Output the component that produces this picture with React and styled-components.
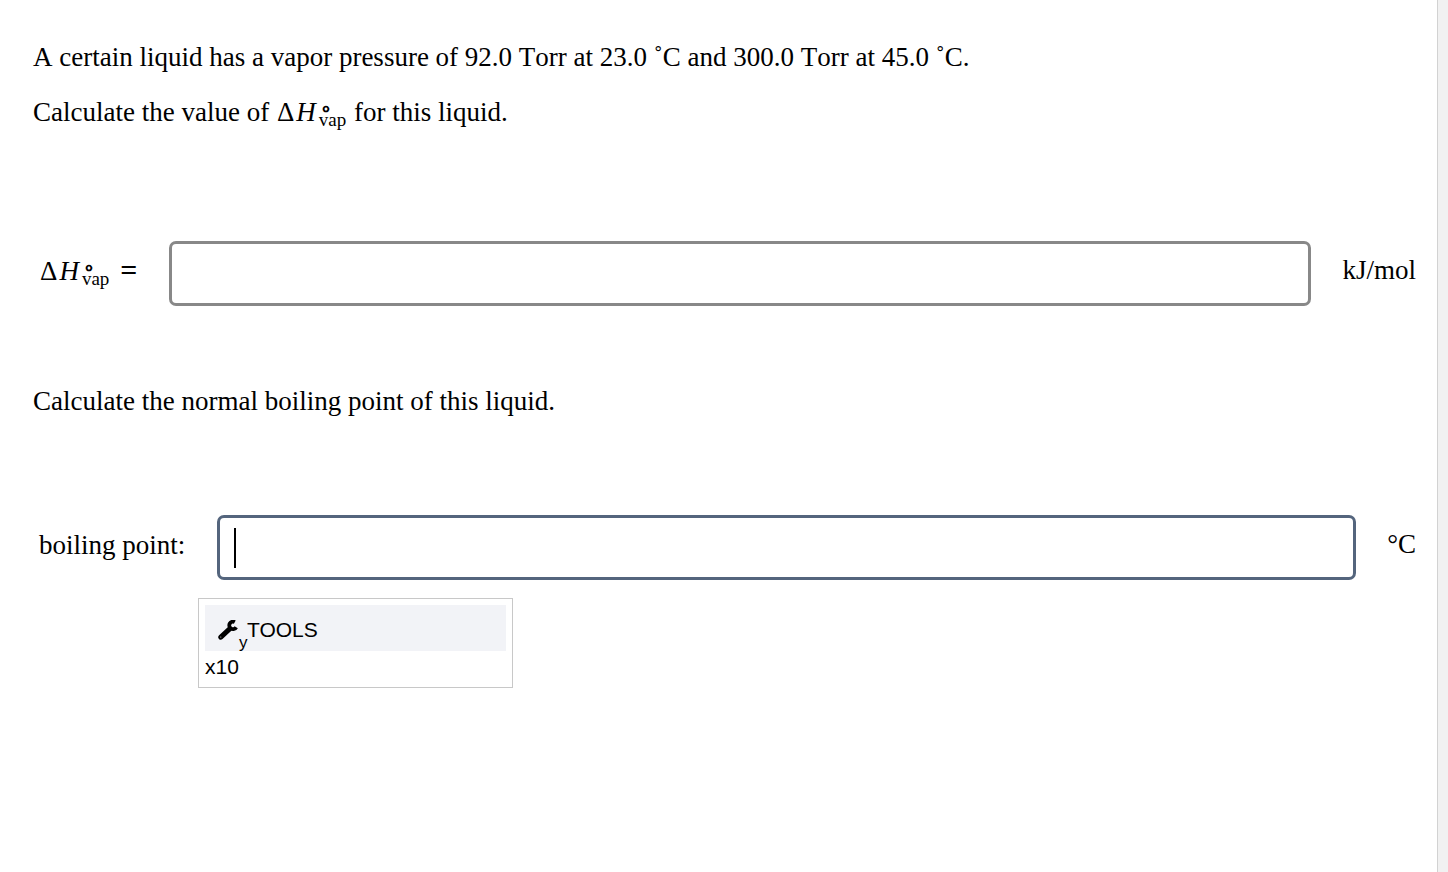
import React, { useState } from 'react';
import styled, { createGlobalStyle } from 'styled-components';

export default function App() {
  const [enthalpy, setEnthalpy] = useState('');
  const [boilingPoint, setBoilingPoint] = useState('');

  return (
    <Page>
      <GlobalStyle />
      <Sheet>
        <Text>A certain liquid has a vapor pressure of 92.0 Torr at 23.0 ˚C and 300.0 Torr at 45.0 ˚C.</Text>
        <Text>
          Calculate the value of <DeltaH /> for this liquid.
        </Text>
        <AnswerRow $top={110}>
          <Label htmlFor='enthalpy'>
            <DeltaH />
            <Equals>=</Equals>
          </Label>
          <Field>
            <Input id='enthalpy' value={enthalpy} onChange={(e) => setEnthalpy(e.target.value)} />
          </Field>
          <Unit>kJ/mol</Unit>
        </AnswerRow>
        <Prompt>Calculate the normal boiling point of this liquid.</Prompt>
        <AnswerRow $top={95}>
          <Label htmlFor='boiling'>boiling point:</Label>
          <Field>
            <Input id='boiling' $active value={boilingPoint} onChange={(e) => setBoilingPoint(e.target.value)} />
            {!boilingPoint && <Caret />}
          </Field>
          <Unit>°C</Unit>
        </AnswerRow>
        <Tools>
          <ToolsButton type='button'>
            <WrenchIcon />
            TOOLS
          </ToolsButton>
          <PowerButton type='button'>
            x10<Exponent>y</Exponent>
          </PowerButton>
        </Tools>
      </Sheet>
    </Page>
  );
}

function DeltaH() {
  return (
    <Formula>
      Δ<i>H</i>
      <Scripts>
        <Degree>∘</Degree>
        vap
      </Scripts>
    </Formula>
  );
}

function WrenchIcon() {
  return (
    <svg width='20' height='20' viewBox='0 0 20 20' fill='none' stroke='black' aria-hidden='true'>
      <path d='M16.8 2.1A3.7 3.7 0 1 0 18.2 7.2' strokeWidth='3.8' />
      <path d='M2.8 17.2L11.4 9.2' strokeWidth='5' strokeLinecap='round' />
      <circle cx='2.8' cy='17' r='0.5' fill='white' stroke='none' />
    </svg>
  );
}

const GlobalStyle = createGlobalStyle`
  * {
    box-sizing: border-box;
  }
  body {
    margin: 0;
    background: #f1f1f1;
  }
`;
const Page = styled.div`
  min-height: 100vh;
  padding-right: 10px;
  display: flex;
`;
const Sheet = styled.main`
  flex: 1;
  padding: 38px 21px 38px 33px;
  background: white;
  border-right: 1px solid #d2d2d2;
  color: black;
  font-family: 'Liberation Serif', 'Times New Roman', serif;
  font-size: 27px;
  font-kerning: none;
  line-height: 38px;
`;
const Text = styled.p`
  margin: 0 0 17px;
`;
const Prompt = styled.p`
  margin: 76px 0 0;
`;
const AnswerRow = styled.div`
  display: flex;
  align-items: center;
  margin-top: ${(props) => props.$top}px;
  padding-left: 6px;
`;
const Label = styled.label`
  margin-right: 32px;
  padding-bottom: 6px;
  white-space: nowrap;
`;
const Field = styled.div`
  position: relative;
  flex: 1;
  display: flex;
`;
const Input = styled.input`
  width: 100%;
  min-width: 0;
  height: 65px;
  padding: 0 14px;
  border: 3px solid ${(props) => (props.$active ? '#54657d' : '#888')};
  border-radius: 7px;
  outline: none;
  background: white;
  font: inherit;
`;
const Caret = styled.span`
  position: absolute;
  left: 17px;
  top: 13px;
  width: 2px;
  height: 40px;
  background: black;
  pointer-events: none;
`;
const Unit = styled.span`
  margin-left: 31px;
  padding-bottom: 8px;
`;
const Formula = styled.span`
  margin: 0 1px;
  line-height: 1;
  white-space: nowrap;
  i {
    margin-left: 2px;
  }
`;
const Scripts = styled.span`
  position: relative;
  margin-left: 3px;
  vertical-align: -5px;
  font-size: 19px;
`;
const Degree = styled.span`
  position: absolute;
  left: 1px;
  bottom: 12px;
  font-weight: bold;
`;
const Equals = styled.span`
  margin-left: 10px;
  font-weight: bold;
  font-size: 30px;
  line-height: 1;
`;
const Tools = styled.div`
  width: 315px;
  height: 90px;
  margin: 18px 0 0 165px;
  padding: 6px;
  border: 1px solid #c8c8c8;
  display: flex;
  flex-direction: column;
  align-items: flex-start;
`;
const ToolsButton = styled.button`
  display: flex;
  flex-shrink: 0;
  align-items: center;
  align-self: stretch;
  gap: 9px;
  height: 46px;
  padding: 4px 13px 0;
  border: 0;
  background: #f2f3f7;
  color: black;
  font: 21px 'Liberation Sans', Arial, sans-serif;
`;
const PowerButton = styled.button`
  position: relative;
  padding: 0;
  border: 0;
  background: none;
  color: black;
  font: 21px/32px 'Liberation Sans', Arial, sans-serif;
`;
const Exponent = styled.span`
  position: absolute;
  left: 34px;
  bottom: 24px;
  font-size: 17px;
`;
